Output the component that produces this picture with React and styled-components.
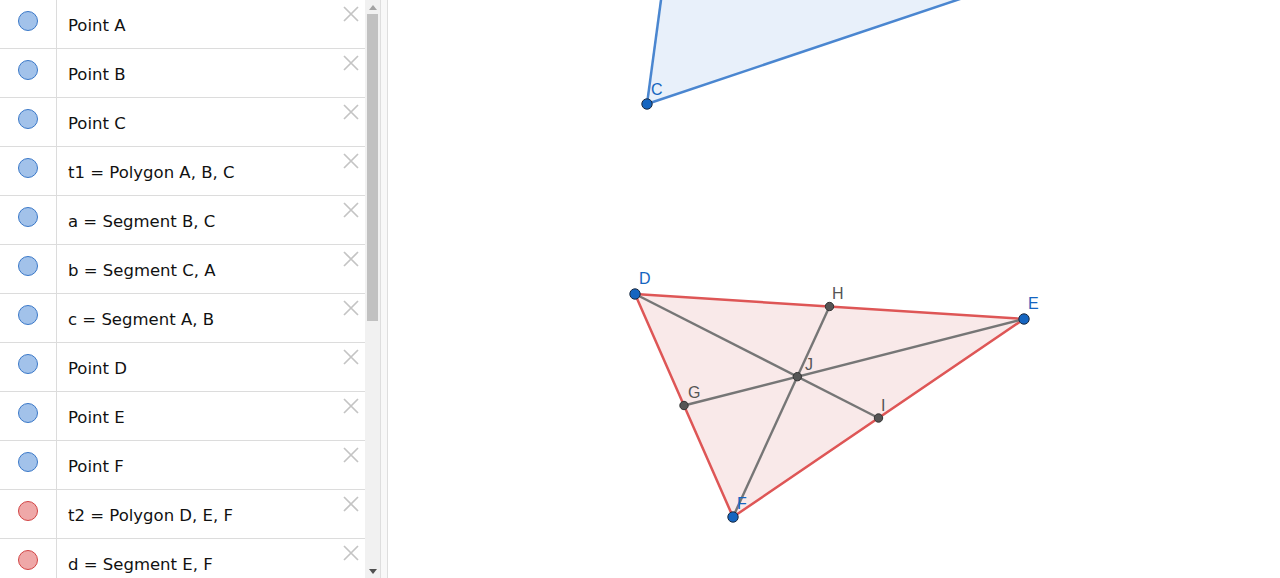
import React from "react";
import styled, { createGlobalStyle } from "styled-components";

const Global = createGlobalStyle`
  html, body { margin: 0; padding: 0; background: #fff; overflow: hidden; }
  #root { height: 578px; }
`;

const Page = styled.div`
  display: flex;
  width: 1280px;
  height: 578px;
  font-family: "DejaVu Sans", "Liberation Sans", sans-serif;
`;

const AlgebraPanel = styled.div`
  display: flex;
  width: 380px;
  height: 100%;
  flex: none;
`;

const List = styled.div`
  width: 365px;
  height: 100%;
  overflow: hidden;
`;

const Row = styled.div`
  display: flex;
  height: 48px;
  border-bottom: 1px solid #dcdcdc;
  position: relative;
`;

const MarbleCell = styled.div`
  width: 57px;
  flex: none;
  border-right: 1px solid #dcdcdc;
  display: flex;
  justify-content: center;
  padding: 11px 1px 0 0;
  box-sizing: border-box;
`;

const Marble = styled.div`
  width: 18px;
  height: 18px;
  border-radius: 50%;
  background: ${(p) => (p.$red ? "#efa8a8" : "#a2c2ea")};
  border: 1px solid ${(p) => (p.$red ? "#d24545" : "#3a78c8")};
`;

const Label = styled.div`
  flex: 1;
  display: flex;
  align-items: center;
  padding: 2px 0 0 11px;
  font-size: 16.5px;
  color: #111;
  white-space: pre;
`;

const Close = styled.div`
  position: absolute;
  top: 6px;
  right: 6px;
  width: 16px;
  height: 16px;
`;

const Scrollbar = styled.div`
  width: 15px;
  height: 100%;
  background: #f1f1f1;
  display: flex;
  flex-direction: column;
  align-items: center;
  flex: none;
`;

const Arrow = styled.div`
  height: 14px;
  width: 15px;
  display: flex;
  align-items: center;
  justify-content: center;
  flex: none;
`;

const Thumb = styled.div`
  width: 11px;
  height: 307px;
  background: #c1c1c1;
  flex: none;
`;

const Spacer = styled.div`
  flex: 1;
`;

const Divider = styled.div`
  width: 6px;
  flex: none;
  background: #f8f8f8;
  border-left: 1px solid #dedede;
  border-right: 1px solid #dedede;
`;

const Canvas = styled.div`
  flex: 1;
  height: 100%;
  background: #fff;
  overflow: hidden;
`;

const rows = [
  ["Point A"],
  ["Point B"],
  ["Point C"],
  ["t1 = Polygon A, B, C"],
  ["a = Segment B, C"],
  ["b = Segment C, A"],
  ["c = Segment A, B"],
  ["Point D"],
  ["Point E"],
  ["Point F"],
  ["t2 = Polygon D, E, F", true],
  ["d = Segment E, F", true],
];

const X = () => (
  <svg width="16" height="16" viewBox="0 0 16 16">
    <path d="M1 1 L15 15 M15 1 L1 15" stroke="#c4c4c4" strokeWidth="1.7" fill="none" />
  </svg>
);

const D = [635, 294];
const E = [1024, 319];
const F = [733, 517];
const mid = (a, b) => [(a[0] + b[0]) / 2, (a[1] + b[1]) / 2];
const H = mid(D, E);
const G = mid(D, F);
const I = mid(E, F);
const J = [(D[0] + E[0] + F[0]) / 3, (D[1] + E[1] + F[1]) / 3];
const C = [647, 104];
const A = [682, -156];
const B = [1422, -156];

const pt = (p) => `${p[0]},${p[1]}`;

const BluePt = ({ p }) => (
  <circle cx={p[0]} cy={p[1]} r="5.2" fill="#1565c0" stroke="#1a2a40" strokeWidth="1" />
);
const GrayPt = ({ p }) => (
  <circle cx={p[0]} cy={p[1]} r="4.2" fill="#555" stroke="#333" strokeWidth="1" />
);

const Drawing = () => (
  <svg width="892" height="578" viewBox="388 0 892 578" style={{ display: "block" }}>
    <polygon points={`${pt(C)} ${pt(A)} ${pt(B)}`} fill="#e8f0fa" />
    <line x1={C[0]} y1={C[1]} x2={A[0]} y2={A[1]} stroke="#4a86d0" strokeWidth="2.5" />
    <line x1={C[0]} y1={C[1]} x2={B[0]} y2={B[1]} stroke="#4a86d0" strokeWidth="2.5" />
    <BluePt p={C} />

    <polygon points={`${pt(D)} ${pt(E)} ${pt(F)}`} fill="#f9e9e9" stroke="#de5656" strokeWidth="2.5" strokeLinejoin="round" />
    <g stroke="#767676" strokeWidth="2.4">
      <line x1={D[0]} y1={D[1]} x2={I[0]} y2={I[1]} />
      <line x1={E[0]} y1={E[1]} x2={G[0]} y2={G[1]} />
      <line x1={F[0]} y1={F[1]} x2={H[0]} y2={H[1]} />
    </g>
    <GrayPt p={H} />
    <GrayPt p={G} />
    <GrayPt p={I} />
    <GrayPt p={J} />
    <BluePt p={D} />
    <BluePt p={E} />
    <BluePt p={F} />
    <g fontSize="16" fontFamily="Liberation Sans, sans-serif">
      <text x="651" y="95" fill="#1565c0">C</text>
      <text x="639" y="284" fill="#1565c0">D</text>
      <text x="1028" y="309" fill="#1565c0">E</text>
      <text x="737" y="509" fill="#1565c0">F</text>
      <text x="832" y="299" fill="#555">H</text>
      <text x="688" y="398" fill="#555">G</text>
      <text x="881" y="411" fill="#555">I</text>
      <text x="805" y="370" fill="#555">J</text>
    </g>
  </svg>
);

export default function App() {
  return (
    <>
      <Global />
      <Page>
        <AlgebraPanel>
          <List>
            {rows.map(([t, red]) => (
              <Row key={t}>
                <MarbleCell>
                  <Marble $red={red} />
                </MarbleCell>
                <Label>{t}</Label>
                <Close>
                  <X />
                </Close>
              </Row>
            ))}
          </List>
          <Scrollbar>
            <Arrow>
              <svg width="8" height="5" viewBox="0 0 8 5"><path d="M0 5 L4 0 L8 5 Z" fill="#a3a3a3" /></svg>
            </Arrow>
            <Thumb />
            <Spacer />
            <Arrow>
              <svg width="8" height="5" viewBox="0 0 8 5"><path d="M0 0 L4 5 L8 0 Z" fill="#505050" /></svg>
            </Arrow>
          </Scrollbar>
        </AlgebraPanel>
        <Divider />
        <Canvas>
          <Drawing />
        </Canvas>
      </Page>
    </>
  );
}
